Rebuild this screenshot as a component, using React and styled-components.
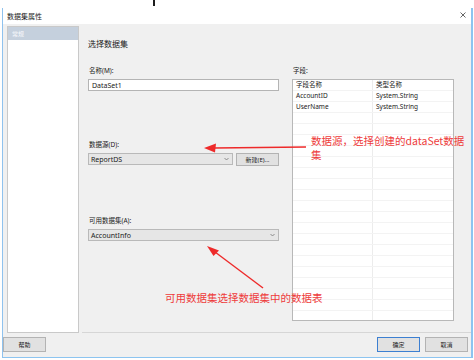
import React from 'react';
import styled, { createGlobalStyle } from 'styled-components';

const GlobalStyle = createGlobalStyle`
  html, body {
    margin: 0;
    padding: 0;
    background: #ffffff;
  }
  body {
    font-family: "Noto Sans", "Noto Sans CJK SC", sans-serif;
    font-size: 7px;
    color: #1a1a1a;
  }
`;

const Page = styled.div`
  position: relative;
  width: 474px;
  height: 360px;
  overflow: hidden;
  background: #ffffff;
`;

const TopStrip = styled.div`
  height: 8px;
  display: flex;
`;

const Cursor = styled.div`
  margin-left: 153px;
  width: 2px;
  height: 6px;
  background: #1c1c1c;
`;

const Window = styled.div`
  margin-left: 2px;
  width: 468px;
  height: 349px;
  display: flex;
  flex-direction: column;
  border-left: 1px solid #8fc2ee;
  border-right: 2px solid #8cc4f0;
  border-bottom: 1px solid #8cc4f0;
  background: #f0f0f0;
`;

const TitleBar = styled.div`
  height: 16px;
  display: flex;
  align-items: center;
  justify-content: space-between;
  padding: 0 5px 0 4px;
  background: #ffffff;
  font-size: 7px;
  color: #222;
`;

const CloseIcon = styled.svg`
  width: 6px;
  height: 6px;
  margin-top: -2px;
`;

const Body = styled.div`
  position: relative;
  flex: 1;
  display: flex;
  padding: 2px 0 0 4px;
`;

const Nav = styled.div`
  width: 70px;
  height: 305px;
  background: #ffffff;
  border: 1px solid #c9c9c9;
`;

const NavItem = styled.div`
  height: 13px;
  display: flex;
  align-items: center;
  padding-left: 4px;
  background: ${p => (p.active ? '#c5d0dd' : 'transparent')};
  color: ${p => (p.active ? '#f7f9fc' : '#222')};
  font-size: 6px;
`;

const Main = styled.div`
  flex: 1;
  margin-left: 3px;
  display: flex;
  flex-direction: column;
`;

const Content = styled.div`
  height: 307px;
  display: grid;
  grid-template-columns: 191px 162px;
  grid-template-rows: auto 1fr;
  column-gap: 13px;
  padding-left: 6px;
  border-bottom: 1px solid #d6d6d6;
  box-sizing: border-box;
`;

const Heading = styled.div`
  grid-column: 1 / 3;
  height: 33px;
  padding-top: 12px;
  box-sizing: border-box;
  font-size: 8px;
  color: #1a1a1a;
`;

const FormCol = styled.div`
  display: flex;
  flex-direction: column;
  align-items: stretch;
`;

const Label = styled.div`
  font-size: 6.5px;
  line-height: 8px;
  height: 8px;
  margin-top: ${p => p.top || 0}px;
  margin-bottom: 4px;
  padding-left: 1px;
  color: #222;
`;

const TextBox = styled.div`
  height: 12px;
  box-sizing: border-box;
  border: 1px solid #b4b4b4;
  background: #ffffff;
  display: flex;
  align-items: center;
  padding-left: 3px;
  font-size: 7px;
`;

const Row = styled.div`
  display: flex;
  gap: 3px;
  align-items: flex-start;
`;

const Combo = styled.div`
  flex: ${p => (p.grow ? 1 : 'none')};
  height: 12px;
  box-sizing: border-box;
  border: 1px solid #b9b9b9;
  background: #e6e6e6;
  display: flex;
  align-items: center;
  justify-content: space-between;
  padding: 0 3px 0 2px;
  font-size: 7px;
`;

const Chevron = styled.svg`
  width: 5px;
  height: 4px;
`;

const Button = styled.div`
  width: ${p => p.w || 43}px;
  height: ${p => p.h || 14}px;
  box-sizing: border-box;
  border: 1px solid ${p => (p.primary ? '#3c7fd1' : '#b3b3b3')};
  background: #e1e1e1;
  display: flex;
  align-items: center;
  justify-content: center;
  font-size: 6px;
  color: #222;
`;

const FieldCol = styled.div`
  display: flex;
  flex-direction: column;
`;

const ListBox = styled.div`
  height: 242px;
  box-sizing: border-box;
  border: 1px solid #b8b8b8;
  background: #ffffff;
  overflow: hidden;
`;

const ListRow = styled.div`
  height: 11px;
  display: grid;
  grid-template-columns: 80px 1fr;
  border-bottom: 1px solid #f3f3f3;
  box-sizing: border-box;
  font-size: 6.5px;
  line-height: 10px;
`;

const Cell = styled.div`
  padding-left: 3px;
  border-right: ${p => (p.first ? '1px solid #ececec' : 'none')};
  white-space: nowrap;
`;

const Footer = styled.div`
  flex: 1;
  display: flex;
  align-items: flex-start;
  justify-content: space-between;
  padding: 4px 3px 0 0;
  margin-left: -79px;
`;

const FooterRight = styled.div`
  display: flex;
  gap: 5px;
`;

const Overlay = styled.svg`
  position: absolute;
  left: 0;
  top: 0;
  width: 474px;
  height: 360px;
  pointer-events: none;
`;

const Note = styled.div`
  position: absolute;
  left: ${p => p.x}px;
  top: ${p => p.y}px;
  font-family: "Noto Sans CJK SC", "Noto Sans", sans-serif;
  font-size: 10.5px;
  line-height: 14px;
  color: #ee3b3b;
  white-space: nowrap;
`;

const fields = [
  ['AccountID', 'System.String'],
  ['UserName', 'System.String'],
];

const ChevronDown = () => (
  <Chevron viewBox="0 0 5 4">
    <path d="M0.5 1 L2.5 3 L4.5 1" fill="none" stroke="#777" strokeWidth="0.8" />
  </Chevron>
);

const App = () => {
  const empty = Array.from({ length: 19 });
  return (
    <Page>
      <GlobalStyle />
      <TopStrip>
        <Cursor />
      </TopStrip>
      <Window>
        <TitleBar>
          <span>数据集属性</span>
          <CloseIcon viewBox="0 0 6 6">
            <path d="M0.5 0.5 L5.5 5.5 M5.5 0.5 L0.5 5.5" stroke="#555" strokeWidth="0.9" />
          </CloseIcon>
        </TitleBar>
        <Body>
          <div>
            <Nav>
              <NavItem active>常规</NavItem>
            </Nav>
          </div>
          <Main>
            <Content>
              <Heading>选择数据集</Heading>
              <FormCol>
                <Label top={8}>名称(M):</Label>
                <TextBox>DataSet1</TextBox>
                <Label top={50}>数据源(D):</Label>
                <Row>
                  <Combo grow>
                    <span>ReportDS</span>
                    <ChevronDown />
                  </Combo>
                  <Button w={43} h={13}>新建(E)...</Button>
                </Row>
                <Label top={51}>可用数据集(A):</Label>
                <Combo>
                  <span>AccountInfo</span>
                  <ChevronDown />
                </Combo>
              </FormCol>
              <FieldCol>
                <Label top={8}>字段:</Label>
                <ListBox>
                  <ListRow>
                    <Cell first>字段名称</Cell>
                    <Cell>类型名称</Cell>
                  </ListRow>
                  {fields.map(([name, type]) => (
                    <ListRow key={name}>
                      <Cell first>{name}</Cell>
                      <Cell>{type}</Cell>
                    </ListRow>
                  ))}
                  {empty.map((_, i) => (
                    <ListRow key={i}>
                      <Cell first />
                      <Cell />
                    </ListRow>
                  ))}
                </ListBox>
              </FieldCol>
            </Content>
            <Footer>
              <Button w={43} h={15}>帮助</Button>
              <FooterRight>
                <Button w={43} h={15} primary>确定</Button>
                <Button w={43} h={15}>取消</Button>
              </FooterRight>
            </Footer>
          </Main>
        </Body>
      </Window>
      <Overlay viewBox="0 0 474 360">
        <line x1="306" y1="147" x2="214" y2="148" stroke="#ee2a2a" strokeWidth="1.6" />
        <polygon points="204,148 216,143.5 215,152.5" fill="#ee2a2a" />
        <line x1="263" y1="288" x2="215" y2="252" stroke="#ee2a2a" strokeWidth="1.4" />
        <polygon points="207,246 219,250.5 213.5,256" fill="#ee2a2a" />
      </Overlay>
      <Note x={311} y={134}>
        数据源，选择创建的dataSet数据
        <br />
        集
      </Note>
      <Note x={165} y={291}>可用数据集选择数据集中的数据表</Note>
    </Page>
  );
};

export default App;
